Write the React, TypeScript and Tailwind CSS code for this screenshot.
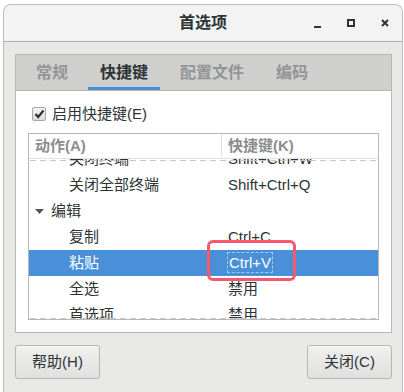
import React from 'react';

const font = { fontFamily: '"Liberation Sans", "Noto Sans CJK SC", sans-serif' };

type Row = { label: string; keys?: string; level: 0 | 1; expander?: boolean; selected?: boolean };

const rows: Row[] = [
  { label: '关闭终端', keys: 'Shift+Ctrl+W', level: 1 },
  { label: '关闭全部终端', keys: 'Shift+Ctrl+Q', level: 1 },
  { label: '编辑', level: 0, expander: true },
  { label: '复制', keys: 'Ctrl+C', level: 1 },
  { label: '粘贴', keys: 'Ctrl+V', level: 1, selected: true },
  { label: '全选', keys: '禁用', level: 1 },
  { label: '首选项', keys: '禁用', level: 1 },
];

function Dashes() {
  return (
    <div className="h-px w-full bg-[linear-gradient(to_right,#c6c6c6_60%,transparent_60%)] bg-[length:10px_1px]" />
  );
}

function TitleBar() {
  return (
    <div className="grid grid-cols-[1fr_auto_1fr] h-[37px] bg-[#f3f3f3] border-b border-[#b0b0ad] items-center">
      <div />
      <div className="text-[16px] font-bold text-[#2e3436]">首选项</div>
      <div className="flex justify-end self-stretch">
        <div className="w-[34px] flex items-center justify-center">
          <div className="w-[7px] h-[2px] bg-[#2e3436] mt-[7px]" />
        </div>
        <div className="w-[34px] flex items-center justify-center">
          <div className="w-[8px] h-[8px] border-2 border-[#2e3436]" />
        </div>
        <div className="w-[34px] flex items-center justify-center">
          <svg width="8" height="8" viewBox="0 0 8 8">
            <path d="M1 1 L7 7 M7 1 L1 7" stroke="#2e3436" strokeWidth="2" />
          </svg>
        </div>
      </div>
    </div>
  );
}

function Tabs() {
  const tabs = ['常规', '快捷键', '配置文件', '编码'];
  return (
    <div className="flex h-[36px] pl-2 gap-2 bg-[#cfcfcd] border-b border-[#b6b6b3]">
      {tabs.map((t, i) => (
        <div
          key={t}
          className={
            'px-3 flex items-center text-[16px] font-bold border-b-[3px] pt-[3px] ' +
            (i === 1 ? 'text-[#2e3436] border-[#4a90d9]' : 'text-[#929595] border-transparent')
          }
        >
          {t}
        </div>
      ))}
    </div>
  );
}

function Tree() {
  return (
    <div className="relative h-[187px] border border-[#b6b6b3] bg-white flex flex-col">
      <div className="flex h-[25px] border-b border-[#e2e2e2] text-[15px] font-bold text-[#8b8e8f]">
        <div className="w-[193px] border-r border-[#e2e2e2] pl-[6px] flex items-center">动作(A)</div>
        <div className="pl-[6px] flex items-center">快捷键(K)</div>
      </div>
      <div className="relative flex-1 overflow-hidden">
        <div className="-mt-[13px]">
          {rows.map((r) => (
            <div
              key={r.label}
              className={
                'flex h-[26px] items-center text-[15px] ' +
                (r.selected ? 'bg-[#4a90d9] text-white' : 'text-[#2e3436]')
              }
            >
              <div
                className={
                  'w-[193px] flex items-center ' + (r.level === 1 ? 'pl-[40px]' : 'pl-[6px]')
                }
              >
                {r.expander && (
                  <svg width="9" height="5" viewBox="0 0 9 5" className="mr-[7px]">
                    <polygon points="0,0 9,0 4.5,5" fill="#555753" />
                  </svg>
                )}
                {r.label}
              </div>
              <div className="pl-[5px]">
                {r.selected ? (
                  <span className="border border-dashed border-white/50 px-px py-[1px]">{r.keys}</span>
                ) : (
                  <span className="pl-[1px]">{r.keys}</span>
                )}
              </div>
            </div>
          ))}
        </div>
        <div className="absolute left-px right-px top-[1px]">
          <Dashes />
        </div>
        <div className="absolute left-px right-px bottom-0">
          <Dashes />
        </div>
      </div>
      <div className="absolute left-[178px] top-[106px] w-[89px] h-[41px] border-[3px] border-[#f8586b] rounded-[6px]" />
    </div>
  );
}

function Button({ children }: { children: React.ReactNode }) {
  return (
    <div className="w-[85px] h-[34px] flex items-center justify-center rounded-[3px] border border-[#b6b6b3] bg-gradient-to-b from-[#f0f0ee] to-[#e0e0de] shadow-[inset_0_1px_0_#fafafa] text-[15px] text-[#2e3436]">
      {children}
    </div>
  );
}

export default function App() {
  return (
    <div className="w-[404px] h-[392px] bg-white pt-[4px] pl-[3px] overflow-hidden" style={font}>
      <div className="w-[400px] h-[388px] flex flex-col border border-b-0 border-[#bdbdbb] rounded-t-[8px] overflow-hidden bg-[#e8e8e7]">
        <TitleBar />
        <div className="pt-[12px] pl-[11px] pr-[10px] flex flex-col">
          <div className="border border-[#b6b6b3] flex flex-col">
            <Tabs />
            <div className="bg-white px-[12px] pt-[12px] pb-[12px] flex flex-col gap-[8px]">
              <div className="h-[22px] flex items-center gap-[6px] pl-[4px] text-[15px] text-[#2e3436]">
                <div className="w-[14px] h-[14px] rounded-[2px] border border-[#a8a8a6] bg-gradient-to-b from-[#f4f4f2] to-[#dcdcda] flex items-center justify-center">
                  <svg width="11" height="10" viewBox="0 0 11 10">
                    <path d="M1.5 5 L4.2 8 L9.5 1.5" stroke="#2e3436" strokeWidth="2.2" fill="none" />
                  </svg>
                </div>
                启用快捷键(E)
              </div>
              <Tree />
            </div>
          </div>
          <div className="flex justify-between mt-[12px]">
            <Button>帮助(H)</Button>
            <Button>关闭(C)</Button>
          </div>
        </div>
      </div>
    </div>
  );
}
